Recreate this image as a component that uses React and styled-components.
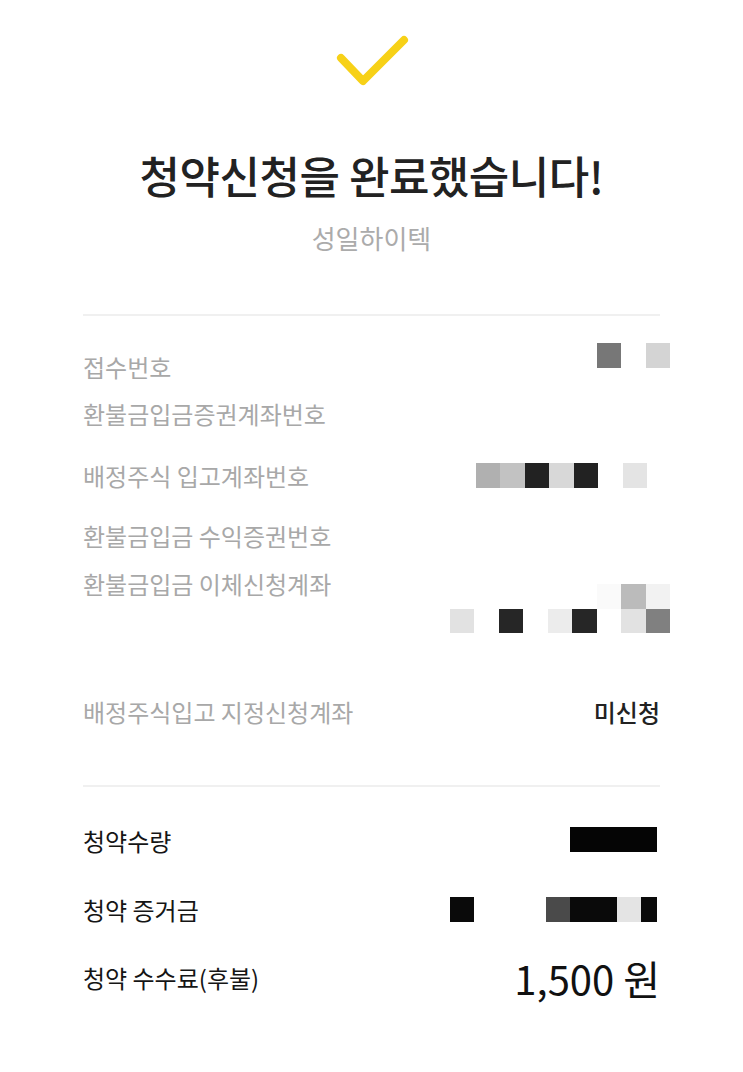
import React from 'react';
import styled, { createGlobalStyle } from 'styled-components';

const GlobalStyle = createGlobalStyle`
  html, body {
    margin: 0;
    padding: 0;
    background: #ffffff;
  }
  body {
    font-family: "Noto Sans CJK KR", "Noto Sans", sans-serif;
    color: #222222;
  }
`;

const Page = styled.div`
  width: 743px;
  min-height: 1072px;
  box-sizing: border-box;
  padding: 30px 83px 40px;
  display: flex;
  flex-direction: column;
`;

const Header = styled.div`
  display: flex;
  flex-direction: column;
  align-items: center;
`;

const CheckIcon = styled.svg`
  width: 84px;
  height: 64px;
  display: block;
`;

const Title = styled.h1`
  margin: 53px 0 0;
  font-size: 44px;
  line-height: 56px;
  font-weight: 500;
  color: #222222;
  letter-spacing: -0.5px;
`;

const Subtitle = styled.div`
  margin-top: 18px;
  font-size: 26px;
  line-height: 34px;
  color: #ababab;
`;

const Divider = styled.div`
  height: 2px;
  background: #f0f0f0;
  margin-top: ${p => p.space}px;
`;

const Row = styled.div`
  display: flex;
  justify-content: space-between;
  align-items: ${p => (p.center ? 'center' : 'flex-start')};
  margin-top: ${p => p.space}px;
`;

const Label = styled.div`
  font-size: 24px;
  line-height: 30px;
  color: ${p => (p.strong ? '#151515' : '#a8a8a8')};
  white-space: nowrap;
`;

const Value = styled.div`
  font-size: 24px;
  line-height: 30px;
  color: #222222;
  font-weight: 500;
`;

const Amount = styled.div`
  font-size: 40px;
  line-height: 44px;
  color: #111111;
`;

const Mosaic = styled.div`
  display: flex;
  flex-direction: column;
  margin-top: ${p => p.top || 0}px;
  margin-right: ${p => p.right || 0}px;
`;

const MosaicLine = styled.div`
  display: flex;
  height: ${p => p.h || 24.5}px;
`;

const Cell = styled.div`
  flex: none;
  height: 100%;
  background: ${p => p.color || 'transparent'};
`;

// each line is a list of [width, colour] pairs
const CELL = 24.5;
const grid = colours => colours.map(c => [CELL, c]);

const RECEIPT_NO = [grid(['#777777', null, '#d4d4d4'])];
const STOCK_ACCOUNT = [
  grid(['#b0b0b0', '#c2c2c2', '#222222', '#d8d8d8', '#222222', null, '#e4e4e4']),
];
const TRANSFER_ACCOUNT = [
  grid([null, null, null, null, null, null, '#fafafa', '#bbbbbb', '#f2f2f2']),
  grid(['#e2e2e2', null, '#262626', null, '#ececec', '#262626', null, '#e2e2e2', '#808080']),
];
const QUANTITY = [[[87, '#050505']]];
const DEPOSIT = [[
  [24, '#0a0a0a'],
  [72, null],
  [24, '#4a4a4a'],
  [47, '#0a0a0a'],
  [24, '#e4e4e4'],
  [16, '#0a0a0a'],
]];

const Blur = ({ lines, top, right }) => (
  <Mosaic top={top} right={right}>
    {lines.map((line, i) => (
      <MosaicLine key={i}>
        {line.map(([w, c], j) => (
          <Cell key={j} color={c} style={{ width: w }} />
        ))}
      </MosaicLine>
    ))}
  </Mosaic>
);

export default function App() {
  return (
    <>
      <GlobalStyle />
      <Page>
        <Header>
          <CheckIcon viewBox="0 0 84 64">
            <polyline
              points="11,28 33,51 74,10"
              fill="none"
              stroke="#f7d117"
              strokeWidth="8"
              strokeLinecap="round"
              strokeLinejoin="round"
            />
          </CheckIcon>
          <Title>청약신청을 완료했습니다!</Title>
          <Subtitle>성일하이텍</Subtitle>
        </Header>

        <Divider space={59} />

        <Row space={36}>
          <Label>접수번호</Label>
          <Blur lines={RECEIPT_NO} top={-9} right={-10} />
        </Row>
        <Row space={17}>
          <Label>환불금입금증권계좌번호</Label>
        </Row>
        <Row space={32}>
          <Label>배정주식 입고계좌번호</Label>
          <Blur lines={STOCK_ACCOUNT} top={2} right={13} />
        </Row>
        <Row space={30}>
          <Label>환불금입금 수익증권번호</Label>
        </Row>
        <Row space={18}>
          <Label>환불금입금 이체신청계좌</Label>
          <Blur lines={TRANSFER_ACCOUNT} top={15} right={-10} />
        </Row>
        <Row space={64}>
          <Label>배정주식입고 지정신청계좌</Label>
          <Value>미신청</Value>
        </Row>

        <Divider space={58} />

        <Row space={39}>
          <Label strong>청약수량</Label>
          <Blur lines={QUANTITY} top={1} right={3} />
        </Row>
        <Row space={39}>
          <Label strong>청약 증거금</Label>
          <Blur lines={DEPOSIT} top={2} right={3} />
        </Row>
        <Row space={31} center>
          <Label strong>청약 수수료(후불)</Label>
          <Amount>1,500 원</Amount>
        </Row>
      </Page>
    </>
  );
}
